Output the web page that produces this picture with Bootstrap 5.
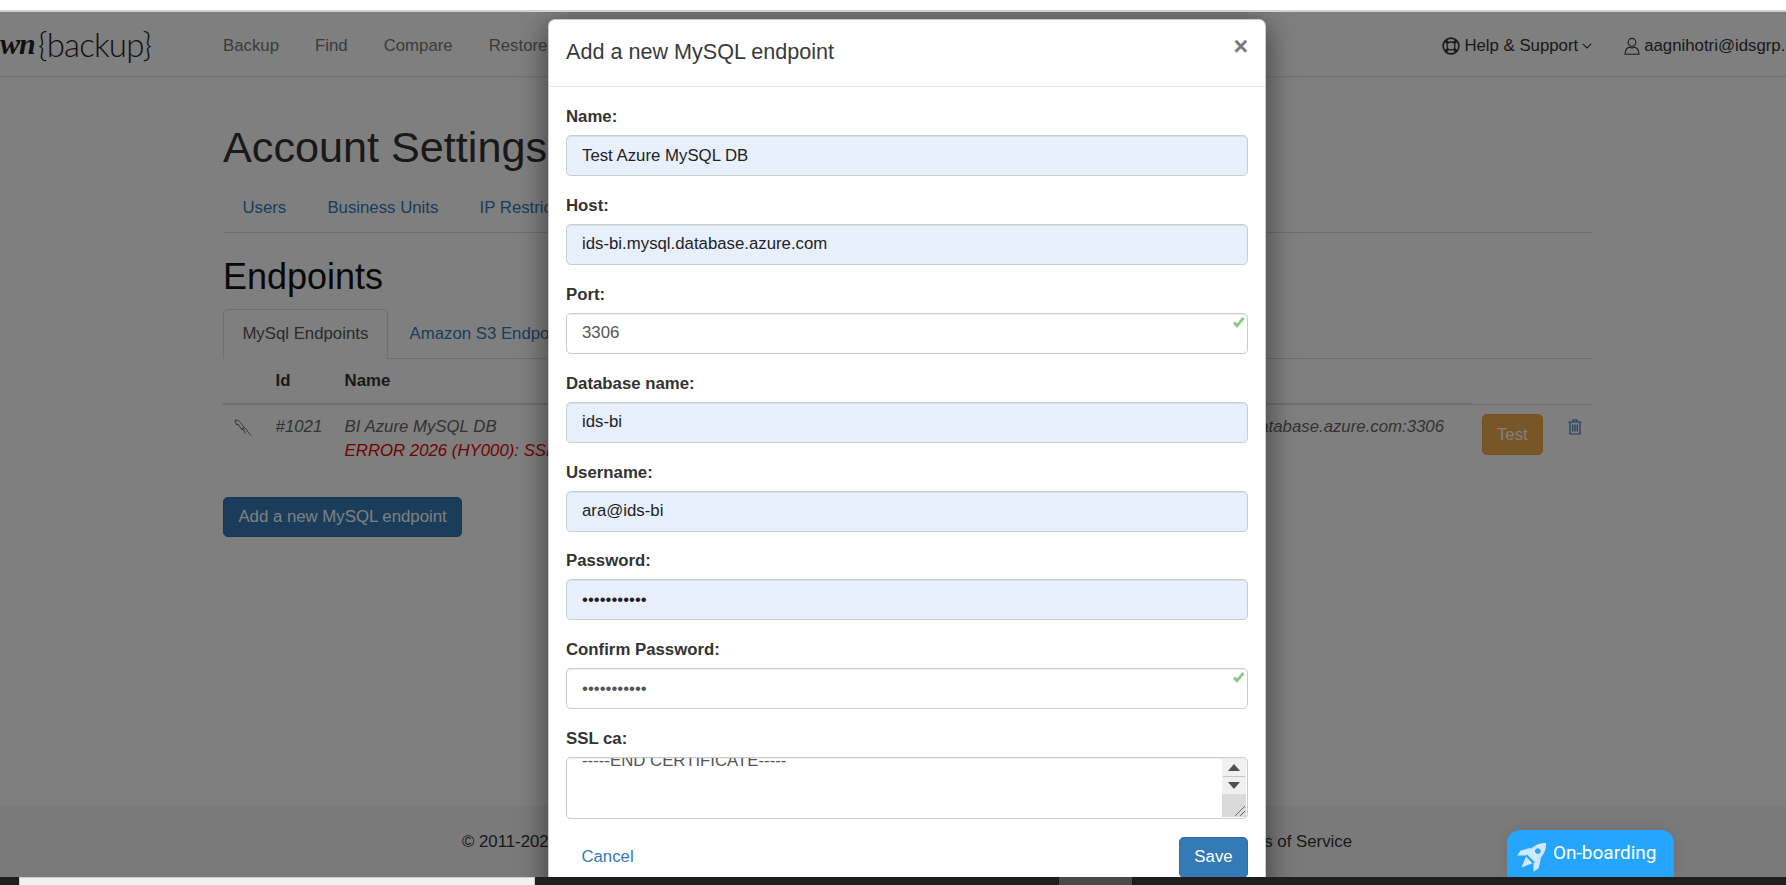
<!DOCTYPE html>
<html lang="en">
<head>
<meta charset="utf-8">
<title>Account Settings</title>
<link href="https://cdn.jsdelivr.net/npm/bootstrap@5.3.0/dist/css/bootstrap.min.css" rel="stylesheet">
<style>
html,body{height:885px;overflow:hidden;}
body{font-family:"Liberation Sans",Arial,sans-serif;font-size:16.8px;line-height:24px;color:#333;background:#fff;}
a{text-decoration:none;color:#337ab7;}
.shell{height:885px;}
.top-white{height:10px;background:#fff;}
.top-grey{height:2px;background:#d2d2d2;}
.app{overflow:hidden;}
.dimmer{position:absolute;inset:0;background:rgba(0,0,0,.5);z-index:1040;}
.app-head{height:65px;padding:0;border-bottom:1px solid #e7e7e7;box-shadow:0 1px 1px rgba(0,0,0,.04);flex-wrap:nowrap;background:#fff;}
.brand{width:223px;flex:none;color:#222;display:flex;align-items:center;height:64px;}
.brand-script{font-family:"Liberation Serif",serif;font-weight:700;font-style:italic;font-size:30px;letter-spacing:-1px;margin-right:3px;}
.brand-code{font-family:Lato,"Open Sans",sans-serif;font-weight:300;font-size:33px;letter-spacing:-.8px;}
.main-nav .nav-link{color:#777;padding:0 18px;font-size:16.8px;margin-top:4px;}
.main-nav .nav-item:first-child .nav-link{padding-left:0;}
.head-right{margin-left:auto;margin-right:-31px;flex:none;color:#333;gap:32px;margin-top:3px;}
.head-right span.itm{display:inline-flex;align-items:center;white-space:nowrap;}
.page-col{margin-left:223px;width:1369px;}
.page-fill{min-height:0;}
h1.ttl{font-size:43.2px;line-height:47.5px;font-weight:500;margin:47px 0 11px;color:#333;}
h2.ttl{font-size:36px;line-height:39.6px;font-weight:500;margin:24px 0 13px;color:#111;}
.nav-tabs{border-bottom:1px solid #ddd;}
.nav-tabs .nav-link{padding:12px 18.4px;margin-right:2.4px;border-radius:4.8px 4.8px 0 0;color:#337ab7;font-size:16.8px;line-height:24px;}
.nav-tabs .nav-link.active{color:#555;border-color:#ddd #ddd #fff;}
.ep-table{table-layout:fixed;width:100%;margin:0 0 24px;--bs-table-bg:transparent;color:#333;}
.ep-table th,.ep-table td{padding:9.6px;border:0;vertical-align:top;font-size:16.8px;line-height:24px;}
.ep-table thead th{border-bottom:2.4px solid #ddd;padding-bottom:10.6px;}
.ep-table thead th.thin-line{border-bottom:1px solid #ddd;padding-bottom:12px;}
.ep-table td{font-style:italic;color:#666;}
.ep-table td.c-row1{padding-top:10px;}
.ep-table td.c-ico{padding-left:11px;padding-right:0;}
.ep-err{color:#e60000;}
.c-ico{width:43px;}.c-id{width:69px;}.c-conn{width:333px;text-align:right;}.c-test{width:86px;}.c-del{width:34px;}
.ep-table td.c-conn{padding-right:28px;}
.ep-table td.c-del{padding-left:10px;padding-right:0;}
.btn{font-size:16.8px;line-height:24px;padding:7.2px 14.4px;border-radius:4.8px;}
.btn-primary{--bs-btn-bg:#337ab7;--bs-btn-border-color:#2e6da4;}
.btn-warning{--bs-btn-bg:#f0ad4e;--bs-btn-border-color:#eea236;--bs-btn-color:#fff;font-style:normal;}
.app-foot{height:71px;background:#f5f5f5;padding:24px 434px 0 462px;color:#333;}
.mdl-wrap{position:absolute;inset:0;z-index:1050;overflow:hidden;}
.mdl-dialog{width:718px;margin:7px 0 0 548px;}
.mdl-dialog .modal-content{background:#fff;border-radius:7px;box-shadow:0 6px 30px rgba(0,0,0,.55);border:1px solid rgba(0,0,0,.2);}
.mdl-dialog .modal-header{padding:16px 17px;border-bottom:1px solid #e5e5e5;height:67px;display:flex;align-items:flex-start;}
.mdl-dialog .modal-title{font-size:21.6px;line-height:31px;color:#3a3a3a;font-weight:500;margin:0;}
.x-btn{background:none;border:0;padding:0;margin-left:auto;margin-top:-2px;margin-right:0;font-size:25px;line-height:1;font-weight:700;color:#7a7a7a;font-family:"Liberation Sans",sans-serif;}
.mdl-dialog .modal-body{padding:18px 17px 0;}
.fld{margin-bottom:17.9px;position:relative;}
.fld label{font-weight:700;margin-bottom:6px;display:block;color:#333;}
.form-control{height:41px;font-size:16.8px;line-height:24px;padding:7.2px 15px;color:#555;background:#fff;border:1px solid #ccc;border-radius:4.8px;box-shadow:inset 0 1px 1px rgba(0,0,0,.075);}
.form-control.filled{background:#e8f0fe;color:#222;}
.ok-tick{position:absolute;right:3px;top:33px;width:13px;height:13px;}
.ta-box{height:62px;border:1px solid #ccc;border-radius:4.8px;box-shadow:inset 0 1px 1px rgba(0,0,0,.075);overflow:hidden;color:#555;}
.ta-text{padding:0 15px;margin-top:-9px;white-space:nowrap;flex:1;}
.sbar{width:24px;flex:none;background:#f0f0f0;margin:1px 1px 1px 0;}
.sb-btn{height:17px;display:flex;align-items:center;justify-content:center;}
.sb-sep{height:1px;background:#c8c8c8;margin:0 1px;}
.sb-thumb{flex:1;background:#dadada;display:flex;align-items:flex-end;justify-content:flex-end;margin-top:0;}
.mdl-dialog .modal-footer{display:flex;padding:0 17px 18px;border:0;margin-top:0;justify-content:space-between;}
.mdl-dialog .modal-footer>*{margin:0;}
.btn-cancel{color:#337ab7;}
.onb{position:absolute;right:112px;bottom:0;width:167px;height:47px;background:#26a5ff;border-radius:13px 13px 0 0;z-index:1060;color:#fff;font-family:Roboto,sans-serif;font-size:19px;padding:0 0 1px 8px;gap:1px;box-shadow:0 0 14px rgba(0,0,0,.1);}
.onb-ico{margin-top:5px;flex:none;}
.btm{height:8px;background:#1e1e1e;position:relative;z-index:1070;}
.btm-tab{width:516px;margin-left:19px;background:#f0f0f0;border:1px solid #ccc;border-bottom:0;}
.btm-dark{width:73px;margin-left:524px;background:#4a4a4a;}
</style>
</head>
<body>
<div class="shell d-flex flex-column">
  <div class="top-white"></div>
  <div class="top-grey"></div>
  <div class="app flex-grow-1 position-relative d-flex flex-column">
    <nav class="navbar app-head d-flex align-items-center">
      <div class="brand"><span class="brand-script">wn</span><span class="brand-code">{backup}</span></div>
      <ul class="nav main-nav flex-nowrap">
        <li class="nav-item"><a class="nav-link" href="#">Backup</a></li>
        <li class="nav-item"><a class="nav-link" href="#">Find</a></li>
        <li class="nav-item"><a class="nav-link" href="#">Compare</a></li>
        <li class="nav-item"><a class="nav-link" href="#">Restore</a></li>
      </ul>
      <div class="head-right d-flex align-items-center">
        <span class="itm">
          <svg width="18" height="18" viewBox="0 0 18 18" class="me-1"><circle cx="9" cy="9" r="7.9" fill="none" stroke="#333" stroke-width="1.6"/><circle cx="9" cy="9" r="4" fill="none" stroke="#333" stroke-width="1.3"/><g stroke="#333" stroke-width="3"><path d="M3.6 3.6 6 6M14.4 3.6 12 6M3.6 14.4 6 12M14.4 14.4 12 12"/></g></svg>
          Help &amp; Support
          <svg width="10" height="6" viewBox="0 0 10 6" class="ms-1"><path d="M.8.8 5 5 9.2.8" fill="none" stroke="#333" stroke-width="1.1"/></svg>
        </span>
        <span class="itm">
          <svg width="16" height="18" viewBox="0 0 16 18" class="me-1"><circle cx="8" cy="5.3" r="3.9" fill="none" stroke="#333" stroke-width="1.1"/><path d="M1 17.2C1.2 13 3.5 10.6 5.5 10.2 7 11 9 11 10.5 10.2 12.5 10.6 14.8 13 15 17.2Z" fill="none" stroke="#333" stroke-width="1.1"/></svg>
          aagnihotri@idsgrp.com
        </span>
      </div>
    </nav>
    <div class="flex-grow-1 page-fill">
      <div class="page-col">
        <h1 class="ttl">Account Settings</h1>
        <ul class="nav nav-tabs">
          <li class="nav-item"><a class="nav-link" href="#">Users</a></li>
          <li class="nav-item"><a class="nav-link" href="#">Business Units</a></li>
          <li class="nav-item"><a class="nav-link" href="#">IP Restrictions</a></li>
        </ul>
        <h2 class="ttl">Endpoints</h2>
        <ul class="nav nav-tabs">
          <li class="nav-item"><a class="nav-link active" href="#">MySql Endpoints</a></li>
          <li class="nav-item"><a class="nav-link" href="#">Amazon S3 Endpoints</a></li>
        </ul>
        <table class="table ep-table">
          <thead>
            <tr>
              <th class="c-ico"></th><th class="c-id">Id</th><th>Name</th><th class="c-conn"></th><th class="c-test thin-line"></th><th class="c-del thin-line"></th>
            </tr>
          </thead>
          <tbody>
            <tr>
              <td class="c-ico c-row1">
                <svg width="18" height="18" viewBox="0 0 18 18"><path d="M1 1C4 .5 6 2.5 8 5.5 10 8.5 13 10.5 13.5 12.5L17 16.5M1 1 2.6 6 4 5 8 11 9 8.500 11 14.5" fill="none" stroke="#333" stroke-width=".7"/></svg>
              </td>
              <td class="c-row1">#1021</td>
              <td class="c-row1"><div>BI Azure MySQL DB</div><div class="ep-err text-nowrap">ERROR 2026 (HY000): SSL connection error</div></td>
              <td class="c-conn c-row1 text-nowrap">ids-bi.mysql.database.azure.com:3306</td>
              <td><a class="btn btn-warning" href="#">Test</a></td>
              <td class="c-del">
                <svg width="14" height="16" viewBox="0 0 14 16"><path d="M.5 3H13.500M5 3V1H9V3M2 3V15H12V3M4.700 5.500V12.500M7 5.500V12.500M9.300 5.500V12.500" fill="none" stroke="#337ab7" stroke-width="1.200"/></svg>
              </td>
            </tr>
          </tbody>
        </table>
        <a class="btn btn-primary" href="#">Add a new MySQL endpoint</a>
      </div>
    </div>
    <footer class="app-foot d-flex justify-content-between">
      <span>© 2011-2021</span><span>Terms of Service</span>
    </footer>

    <div class="dimmer"></div>

    <div class="mdl-wrap">
      <div class="mdl-dialog">
        <div class="modal-content">
          <div class="modal-header">
            <h5 class="modal-title">Add a new MySQL endpoint</h5>
            <button type="button" class="x-btn">×</button>
          </div>
          <div class="modal-body">
            <div class="fld"><label>Name:</label><input class="form-control filled" value="Test Azure MySQL DB"></div>
            <div class="fld"><label>Host:</label><input class="form-control filled" value="ids-bi.mysql.database.azure.com"></div>
            <div class="fld"><label>Port:</label><input class="form-control" value="3306">
              <svg class="ok-tick" viewBox="0 0 13 13"><path d="M1 7.500 3 5.500 5 7.500 10.500 1 12.500 3 5 12Z" fill="#8cc68c"/></svg></div>
            <div class="fld"><label>Database name:</label><input class="form-control filled" value="ids-bi"></div>
            <div class="fld"><label>Username:</label><input class="form-control filled" value="ara@ids-bi"></div>
            <div class="fld"><label>Password:</label><input class="form-control filled" type="password" value="aaaaaaaaaaa"></div>
            <div class="fld"><label>Confirm Password:</label><input class="form-control" type="password" value="aaaaaaaaaaa">
              <svg class="ok-tick" viewBox="0 0 13 13"><path d="M1 7.500 3 5.500 5 7.500 10.500 1 12.500 3 5 12Z" fill="#8cc68c"/></svg></div>
            <div class="fld"><label>SSL ca:</label>
              <div class="ta-box d-flex">
                <div class="ta-text">-----END CERTIFICATE-----</div>
                <div class="sbar d-flex flex-column">
                  <div class="sb-btn"><svg width="12" height="7" viewBox="0 0 12 7"><path d="M6 0 12 7H0Z" fill="#505050"/></svg></div>
                  <div class="sb-sep"></div>
                  <div class="sb-btn"><svg width="12" height="7" viewBox="0 0 12 7"><path d="M0 0H12L6 7Z" fill="#505050"/></svg></div>
                  <div class="sb-thumb"><svg width="12" height="12" viewBox="0 0 12 12"><path d="M11 1 1 11M11 6 6 11" stroke="#444" stroke-width=".7" fill="none"/></svg></div>
                </div>
              </div>
            </div>
          </div>
          <div class="modal-footer">
            <a class="btn btn-cancel" href="#">Cancel</a>
            <a class="btn btn-primary" href="#">Save</a>
          </div>
        </div>
      </div>
    </div>

    <div class="onb d-flex align-items-center">
      <svg class="onb-ico" width="37" height="37" viewBox="0 0 24 24"><g transform="rotate(45 12 12)"><path d="M12 .5C15.600 3.500 16.800 8 16.200 14.500L7.800 14.500C7.200 8 8.400 3.500 12 .5Z" fill="#cfe9ff"/><path d="M7.500 9.500 3.800 15.500 4.500 19.500 8.500 15.500ZM16.500 9.500 20.200 15.500 19.500 19.500 15.500 15.500Z" fill="#cfe9ff"/><path d="M9 16H15L12 23Z" fill="#cfe9ff"/><circle cx="12" cy="8" r="1.800" fill="#26a5ff"/></g></svg>
      <span>On-boarding</span>
    </div>
  </div>
  <div class="btm d-flex">
    <div class="btm-tab"></div>
    <div class="btm-dark"></div>
  </div>
</div>
<script src="https://cdn.jsdelivr.net/npm/bootstrap@5.3.0/dist/js/bootstrap.bundle.min.js"></script>
</body>
</html>
